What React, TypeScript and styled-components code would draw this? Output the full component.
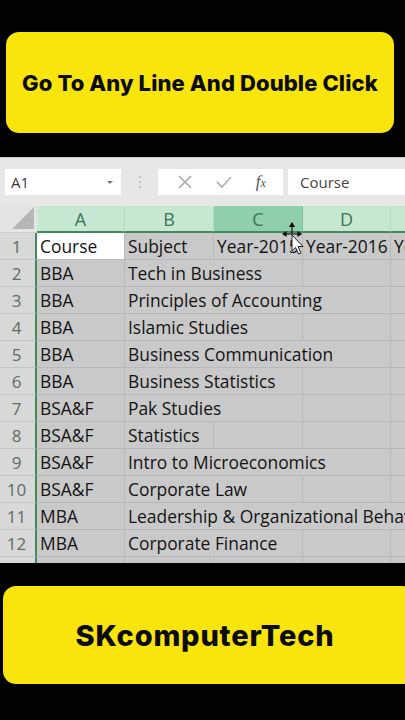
import React from 'react'
import styled, { createGlobalStyle } from 'styled-components'

const Global = createGlobalStyle`
  html, body {
    margin: 0;
    padding: 0;
    background: #000;
  }
  body {
    width: 405px;
    height: 720px;
    overflow: hidden;
    font-family: 'Open Sans', 'Noto Sans', sans-serif;
  }
`

const Page = styled.div`
  width: 405px;
  height: 720px;
  background: #020202;
  display: flex;
  flex-direction: column;
  overflow: hidden;
`

const Banner = styled.div<{ $top: number; $left: number; $width: number; $height: number }>`
  margin-top: ${p => p.$top}px;
  margin-left: ${p => p.$left}px;
  width: ${p => p.$width}px;
  height: ${p => p.$height}px;
  flex-shrink: 0;
  background: #f9e40c;
  border-radius: 13px;
  display: flex;
  align-items: center;
  justify-content: center;
`

const BannerText = styled.span<{ $size: number; $spacing: number; $shift?: number }>`
  font-family: Inter, 'Noto Sans', sans-serif;
  font-weight: 800;
  font-size: ${p => p.$size}px;
  letter-spacing: ${p => p.$spacing}px;
  color: #0b0b0b;
  white-space: nowrap;
  margin-left: ${p => p.$shift ?? 0}px;
`

const Sheet = styled.div`
  margin-top: 24px;
  height: 405px;
  flex-shrink: 0;
  background: #e7e7e7;
  border-top: 1px solid #cfcfcf;
  position: relative;
  overflow: hidden;
`

const Toolbar = styled.div`
  height: 48px;
  display: flex;
  align-items: center;
  padding: 0 0 0 5px;
`

const NameBox = styled.div`
  width: 116px;
  height: 26px;
  background: #fff;
  display: flex;
  align-items: center;
  justify-content: space-between;
  padding: 0 8px 0 6px;
  box-sizing: border-box;
  font-size: 15px;
  color: #3a3a3a;
`

const Caret = styled.span`
  width: 0;
  height: 0;
  border-left: 3px solid transparent;
  border-right: 3px solid transparent;
  border-top: 3px solid #777;
`

const Dots = styled.div`
  width: 37px;
  display: flex;
  flex-direction: column;
  align-items: center;
  gap: 3px;
  span {
    width: 2px;
    height: 2px;
    background: #b5b5b5;
    border-radius: 1px;
  }
`

const FxBox = styled.div`
  width: 125px;
  height: 26px;
  background: #fff;
  display: flex;
  align-items: center;
  justify-content: space-around;
  padding: 0 6px 0 8px;
  box-sizing: border-box;
`

const FxLabel = styled.span`
  font-family: 'Liberation Serif', serif;
  font-style: italic;
  font-size: 17px;
  color: #555;
  span {
    font-size: 12px;
  }
`

const Formula = styled.div`
  margin-left: 5px;
  flex: 1;
  height: 26px;
  background: #fff;
  display: flex;
  align-items: center;
  padding-left: 12px;
  font-size: 15px;
  color: #444;
`

const Grid = styled.div`
  display: grid;
  grid-template-columns: 37px 88px 89px 89px 88px 100px;
  grid-auto-rows: 27px;
`

const Corner = styled.div`
  height: 26px;
  align-self: start;
  background: #e4e4e4;
  position: relative;
  border-bottom: 1px solid #d0d0d0;
  &::after {
    content: '';
    position: absolute;
    right: 3px;
    bottom: 3px;
    width: 0;
    height: 0;
    border-left: 22px solid transparent;
    border-bottom: 22px solid #b6b6b6;
  }
`

const ColHead = styled.div<{ $active?: boolean }>`
  height: 25px;
  align-self: start;
  background: ${p => (p.$active ? '#8fcfaa' : '#c6e8d3')};
  border-right: 1px solid ${p => (p.$active ? '#7fbf99' : '#b2d9c1')};
  border-bottom: 2px solid #3f8a5e;
  display: flex;
  align-items: center;
  justify-content: center;
  font-size: 18px;
  color: #3c7552;
`

const RowHead = styled.div`
  background: #d8d8d8;
  border-right: 2px solid #3f8a5e;
  border-bottom: 1px solid #c4c4c4;
  display: flex;
  align-items: center;
  justify-content: center;
  padding-right: 2px;
  font-size: 17px;
  color: #5f6d63;
  box-sizing: border-box;
`

const Cell = styled.div<{ $span: number; $active?: boolean }>`
  grid-column: span ${p => p.$span};
  background: ${p => (p.$active ? '#fff' : '#c9c9c9')};
  border-right: 1px solid #b9b9b9;
  border-bottom: 1px solid #b9b9b9;
  display: flex;
  align-items: center;
  padding-left: 3px;
  font-size: 17.4px;
  color: #141414;
  white-space: nowrap;
  overflow: hidden;
  box-sizing: border-box;
`

const Pointer = styled.svg`
  position: absolute;
  left: 282px;
  top: 64px;
`

type Row = { n: number; cells: [string, number][] }

// each row spans columns A..E (5 in total)
const rows: Row[] = [
  { n: 2, cells: [['BBA', 1], ['Tech in Business', 2], ['', 1], ['', 1]] },
  { n: 3, cells: [['BBA', 1], ['Principles of Accounting', 3], ['', 1]] },
  { n: 4, cells: [['BBA', 1], ['Islamic Studies', 2], ['', 1], ['', 1]] },
  { n: 5, cells: [['BBA', 1], ['Business Communication', 3], ['', 1]] },
  { n: 6, cells: [['BBA', 1], ['Business Statistics', 2], ['', 1], ['', 1]] },
  { n: 7, cells: [['BSA&F', 1], ['Pak Studies', 2], ['', 1], ['', 1]] },
  { n: 8, cells: [['BSA&F', 1], ['Statistics', 1], ['', 1], ['', 1], ['', 1]] },
  { n: 9, cells: [['BSA&F', 1], ['Intro to Microeconomics', 3], ['', 1]] },
  { n: 10, cells: [['BSA&F', 1], ['Corporate Law', 2], ['', 1], ['', 1]] },
  { n: 11, cells: [['MBA', 1], ['Leadership & Organizational Behavior', 4]] },
  { n: 12, cells: [['MBA', 1], ['Corporate Finance', 2], ['', 1], ['', 1]] },
  { n: 13, cells: [['', 1], ['', 1], ['', 1], ['', 1], ['', 1]] },
]

export default function App() {
  return (
    <Page>
      <Global />
      <Banner $top={32} $left={6} $width={388} $height={101}>
        <BannerText $size={22} $spacing={0.1}>
          Go To Any Line And Double Click
        </BannerText>
      </Banner>

      <Sheet>
        <Toolbar>
          <NameBox>
            A1
            <Caret />
          </NameBox>
          <Dots>
            <span />
            <span />
            <span />
          </Dots>
          <FxBox>
            <svg width="16" height="16" viewBox="0 0 16 16">
              <path d="M2 2 L14 14 M14 2 L2 14" stroke="#a8a8a8" strokeWidth="1.6" fill="none" />
            </svg>
            <svg width="18" height="16" viewBox="0 0 18 16">
              <path d="M2 8 L7 13 L16 3" stroke="#b3b3b3" strokeWidth="1.8" fill="none" />
            </svg>
            <FxLabel>
              f<span>x</span>
            </FxLabel>
          </FxBox>
          <Formula>Course</Formula>
        </Toolbar>

        <Grid>
          <Corner />
          <ColHead>A</ColHead>
          <ColHead>B</ColHead>
          <ColHead $active>C</ColHead>
          <ColHead>D</ColHead>
          <ColHead>E</ColHead>

          <RowHead>1</RowHead>
          <Cell $span={1} $active>Course</Cell>
          <Cell $span={1}>Subject</Cell>
          <Cell $span={1}>Year-2015</Cell>
          <Cell $span={1}>Year-2016</Cell>
          <Cell $span={1}>Year-2017</Cell>

          {rows.map(r => (
            <React.Fragment key={r.n}>
              <RowHead>{r.n}</RowHead>
              {r.cells.map(([text, span], i) => (
                <Cell key={i} $span={span}>
                  {text}
                </Cell>
              ))}
            </React.Fragment>
          ))}
        </Grid>

        <Pointer width="24" height="34" viewBox="0 0 24 34">
          <g stroke="#111" strokeWidth="1.2" fill="#111">
            <line x1="10" y1="4" x2="10" y2="12" />
            <path d="M10 1 L8 4.5 L12 4.5 Z" />
            <line x1="3" y1="12" x2="17" y2="12" />
            <path d="M1 12 L4 10 L4 14 Z" />
            <path d="M19 12 L16 10 L16 14 Z" />
          </g>
          <path
            d="M10 13 L10 29 L13.5 25.5 L16.5 32 L19 31 L16 24.5 L21 24.5 Z"
            fill="#fff"
            stroke="#222"
            strokeWidth="1"
          />
        </Pointer>
      </Sheet>

      <Banner $top={23} $left={3} $width={412} $height={98}>
        <BannerText $size={29} $spacing={0.8} $shift={-8}>
          SKcomputerTech
        </BannerText>
      </Banner>
    </Page>
  )
}
